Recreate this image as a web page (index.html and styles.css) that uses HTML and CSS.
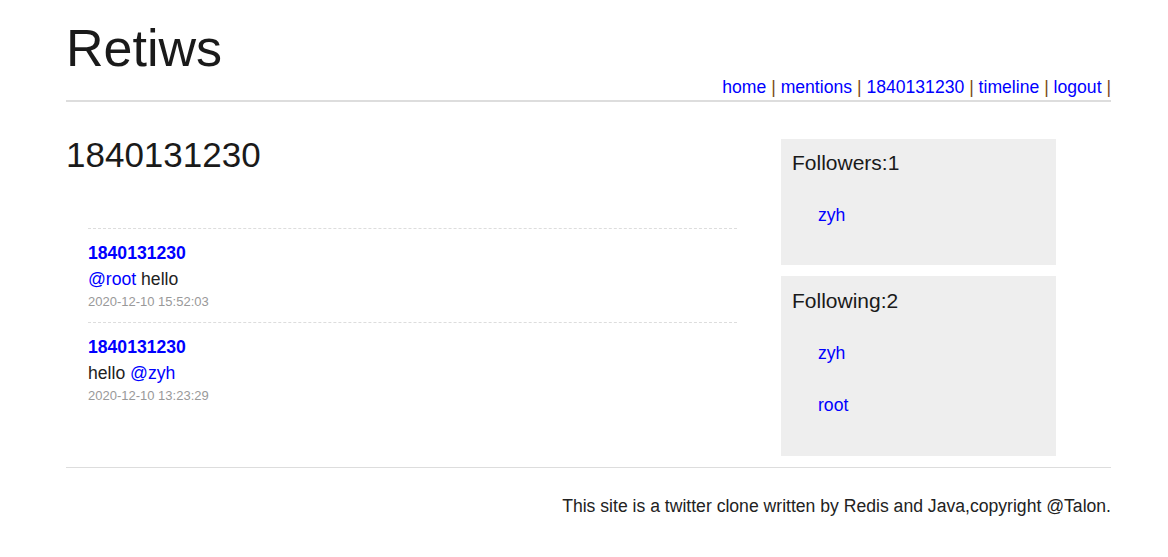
FILE: index.html
```html
<!DOCTYPE html>
<html>
<head>
<meta charset="utf-8">
<title>Retiws</title>
<link rel="stylesheet" href="styles.css">
</head>
<body>
<div class="page">
  <header class="header">
    <h1 class="logo">Retiws</h1>
    <nav class="nav">
      <a href="#">home</a> <span class="sep">|</span>
      <a href="#">mentions</a> <span class="sep">|</span>
      <a href="#">1840131230</a> <span class="sep">|</span>
      <a href="#">timeline</a> <span class="sep">|</span>
      <a href="#">logout</a> <span class="sep">|</span>
    </nav>
  </header>

  <div class="main">
    <section class="content">
      <h2 class="username">1840131230</h2>
      <div class="posts">
        <div class="post">
          <a class="post-user" href="#">1840131230</a>
          <div class="post-text"><a href="#">@root</a> hello</div>
          <div class="post-time">2020-12-10 15:52:03</div>
        </div>
        <div class="post">
          <a class="post-user" href="#">1840131230</a>
          <div class="post-text">hello <a href="#">@zyh</a></div>
          <div class="post-time">2020-12-10 13:23:29</div>
        </div>
      </div>
    </section>

    <aside class="sidebar">
      <div class="box">
        <h3 class="box-title">Followers:1</h3>
        <ul class="box-list">
          <li><a href="#">zyh</a></li>
        </ul>
      </div>
      <div class="box box-following">
        <h3 class="box-title">Following:2</h3>
        <ul class="box-list">
          <li><a href="#">zyh</a></li>
          <li><a href="#">root</a></li>
        </ul>
      </div>
    </aside>
  </div>

  <footer class="footer">
    This site is a twitter clone written by Redis and Java,copyright @Talon.
  </footer>
</div>
</body>
</html>
```

FILE: styles.css
```css
html, body {
  margin: 0;
  padding: 0;
  background: #fff;
}

body {
  font-family: "Liberation Sans", Arial, Helvetica, sans-serif;
  color: #222;
  font-size: 17.6px;
}

a {
  color: #0000ff;
  text-decoration: none;
}

.page {
  width: 1045px;
  margin-left: 66px;
}

.header {
  padding-top: 19px;
  padding-bottom: 3px;
  border-bottom: 2px solid #ddd;
}

.logo {
  margin: 0;
  font-size: 52px;
  font-weight: normal;
  line-height: 58px;
  color: #1a1a1a;
}

.nav {
  text-align: right;
  font-size: 17.6px;
  line-height: 20px;
}

.sep {
  color: #7a4a20;
}

.main {
  display: grid;
  grid-template-columns: 715px 275px;
  align-items: start;
  margin-top: 33px;
}

.username {
  margin: 0;
  font-size: 35px;
  font-weight: normal;
  line-height: 40px;
  color: #1a1a1a;
}

.posts {
  margin-top: 53px;
  margin-left: 22px;
  width: 649px;
}

.post {
  border-top: 1px dashed #ddd;
  padding: 11px 0 10px;
}

.post-user {
  display: block;
  font-weight: bold;
  font-size: 17.6px;
  line-height: 26px;
}

.post-text {
  font-size: 17.6px;
  line-height: 26px;
}

.post-time {
  font-size: 13px;
  line-height: 19.5px;
  color: #999;
}

.sidebar {
  margin-top: 4px;
  display: flex;
  flex-direction: column;
  gap: 11px;
}

.box {
  background: #eee;
  padding: 12px 11px 24px;
}

.box-following {
  padding-top: 13px;
  padding-bottom: 25px;
}

.box-title {
  margin: 0;
  font-size: 21px;
  font-weight: normal;
  line-height: 24px;
  color: #1a1a1a;
}

.box-list {
  list-style: none;
  margin: 14px 0 0;
  padding-left: 26px;
}

.box-list li {
  font-size: 17.6px;
  line-height: 52px;
}

.footer {
  margin-top: 11px;
  border-top: 1px solid #ddd;
  padding-top: 28px;
  text-align: right;
  font-size: 17.6px;
  line-height: 20px;
  color: #222;
}
```
